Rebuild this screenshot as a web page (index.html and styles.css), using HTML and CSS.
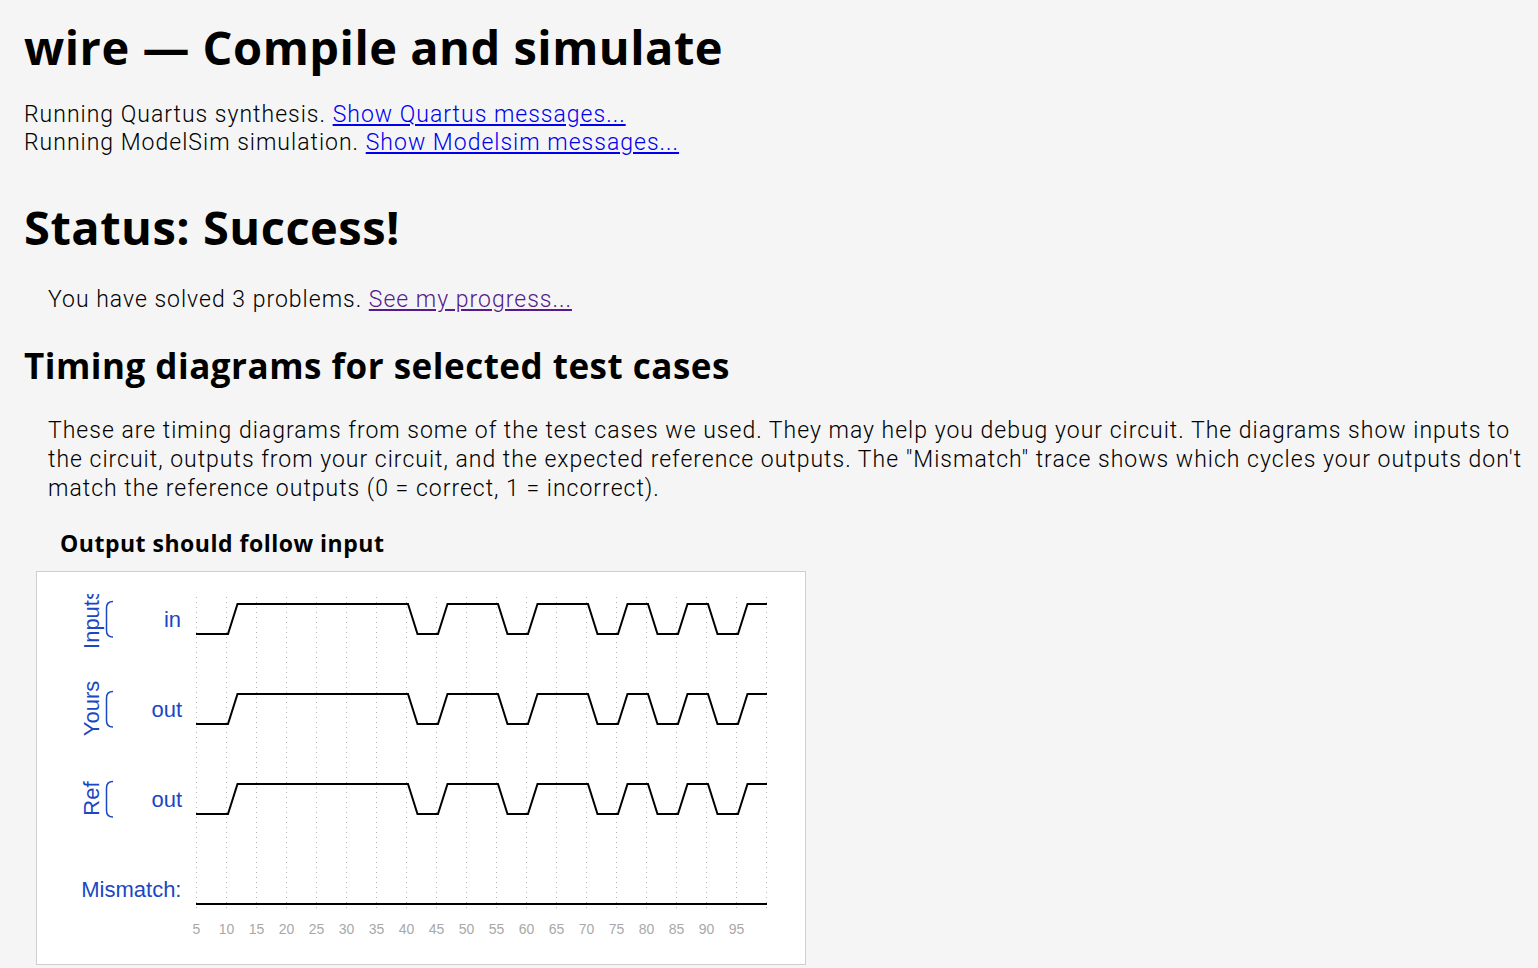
FILE: index.html
```html
<!DOCTYPE html>
<html lang="en">
<head>
<meta charset="utf-8">
<title>wire — Compile and simulate</title>
<link rel="stylesheet" href="styles.css">
</head>
<body>
<main class="page">
  <h1 class="title">wire — Compile and simulate</h1>
  <p class="log">Running Quartus synthesis. <a class="link" href="#quartus">Show Quartus messages...</a><br>Running ModelSim simulation. <a class="link" href="#modelsim">Show Modelsim messages...</a></p>

  <h1 class="status">Status: Success!</h1>
  <p class="indent solved">You have solved 3 problems. <a class="link visited" href="#progress">See my progress...</a></p>

  <h2 class="section">Timing diagrams for selected test cases</h2>
  <p class="indent intro">These are timing diagrams from some of the test cases we used. They may help you debug your circuit. The diagrams show inputs to the circuit, outputs from your circuit, and the expected reference outputs. The "Mismatch" trace shows which cycles your outputs don't match the reference outputs (0 = correct, 1 = incorrect).</p>

  <h4 class="case-title">Output should follow input</h4>
  <div class="diagram">
    <svg class="wave" width="768" height="392" viewBox="37 572 768 392" xmlns="http://www.w3.org/2000/svg">
      <defs>
        <clipPath id="clipTop"><rect x="37" y="594" width="768" height="370"/></clipPath>
      </defs>
      <g class="grid">
        <line x1="196.5" y1="597" x2="196.5" y2="912"/>
        <line x1="226.5" y1="597" x2="226.5" y2="912"/>
        <line x1="256.5" y1="597" x2="256.5" y2="912"/>
        <line x1="286.5" y1="597" x2="286.5" y2="912"/>
        <line x1="316.5" y1="597" x2="316.5" y2="912"/>
        <line x1="346.5" y1="597" x2="346.5" y2="912"/>
        <line x1="376.5" y1="597" x2="376.5" y2="912"/>
        <line x1="406.5" y1="597" x2="406.5" y2="912"/>
        <line x1="436.5" y1="597" x2="436.5" y2="912"/>
        <line x1="466.5" y1="597" x2="466.5" y2="912"/>
        <line x1="496.5" y1="597" x2="496.5" y2="912"/>
        <line x1="526.5" y1="597" x2="526.5" y2="912"/>
        <line x1="556.5" y1="597" x2="556.5" y2="912"/>
        <line x1="586.5" y1="597" x2="586.5" y2="912"/>
        <line x1="616.5" y1="597" x2="616.5" y2="912"/>
        <line x1="646.5" y1="597" x2="646.5" y2="912"/>
        <line x1="676.5" y1="597" x2="676.5" y2="912"/>
        <line x1="706.5" y1="597" x2="706.5" y2="912"/>
        <line x1="736.5" y1="597" x2="736.5" y2="912"/>
        <line x1="766.5" y1="597" x2="766.5" y2="912"/>
      </g>

      <g class="group-label">
        <g clip-path="url(#clipTop)">
          <text transform="translate(99 619) rotate(-90)">Inputs</text>
        </g>
        <text transform="translate(99 708.5) rotate(-90)">Yours</text>
        <text transform="translate(99 798.5) rotate(-90)">Ref</text>
      </g>
      <g class="bracket">
        <path d="M113 601.5 Q106.5 601.5 106.5 608 V630.5 Q106.5 637 113 637"/>
        <path d="M113 691.5 Q106.5 691.5 106.5 698 V720.5 Q106.5 727 113 727"/>
        <path d="M113 781.5 Q106.5 781.5 106.5 788 V810.5 Q106.5 817 113 817"/>
      </g>
      <g class="sig-label">
        <text x="181" y="627">in</text>
        <text x="182" y="717">out</text>
        <text x="182" y="807">out</text>
        <text x="181.5" y="897">Mismatch:</text>
      </g>

      <g class="trace">
        <path d="M196 634 H228 L237.5 604 H408 L417.5 634 H438 L447.5 604 H498 L507.5 634 H528 L537.5 604 H588 L597.5 634 H618 L627.5 604 H648 L657.5 634 H678 L687.5 604 H708 L717.5 634 H738 L747.5 604 H767"/>
        <path d="M196 724 H228 L237.5 694 H408 L417.5 724 H438 L447.5 694 H498 L507.5 724 H528 L537.5 694 H588 L597.5 724 H618 L627.5 694 H648 L657.5 724 H678 L687.5 694 H708 L717.5 724 H738 L747.5 694 H767"/>
        <path d="M196 814 H228 L237.5 784 H408 L417.5 814 H438 L447.5 784 H498 L507.5 814 H528 L537.5 784 H588 L597.5 814 H618 L627.5 784 H648 L657.5 814 H678 L687.5 784 H708 L717.5 814 H738 L747.5 784 H767"/>
        <path d="M196 904 H767"/>
      </g>

      <g class="axis">
        <text x="196.5" y="934">5</text>
        <text x="226.5" y="934">10</text>
        <text x="256.5" y="934">15</text>
        <text x="286.5" y="934">20</text>
        <text x="316.5" y="934">25</text>
        <text x="346.5" y="934">30</text>
        <text x="376.5" y="934">35</text>
        <text x="406.5" y="934">40</text>
        <text x="436.5" y="934">45</text>
        <text x="466.5" y="934">50</text>
        <text x="496.5" y="934">55</text>
        <text x="526.5" y="934">60</text>
        <text x="556.5" y="934">65</text>
        <text x="586.5" y="934">70</text>
        <text x="616.5" y="934">75</text>
        <text x="646.5" y="934">80</text>
        <text x="676.5" y="934">85</text>
        <text x="706.5" y="934">90</text>
        <text x="736.5" y="934">95</text>
      </g>
    </svg>
  </div>
</main>
</body>
</html>
```

FILE: styles.css
```css
html, body {
  margin: 0;
  padding: 0;
  background: #f5f5f5;
}

body {
  font-family: "Roboto", "Lato", sans-serif;
  font-weight: 300;
  font-size: 23px;
  line-height: 28px;
  letter-spacing: 1px;
  color: #000;
}

.page {
  padding: 19px 8px 0 24px;
}

.title,
.status,
.section,
.case-title {
  font-family: "Open Sans", "Noto Sans", sans-serif;
  font-weight: 700;
  color: #000;
  margin: 0;
  letter-spacing: 0.5px;
}

.title,
.status {
  font-size: 47px;
  line-height: 56px;
}

.log {
  margin: 26px 0 0 0;
}

.status {
  margin-top: 42px;
}

.indent {
  margin: 0 0 0 24px;
}

.solved {
  margin-top: 31px;
}

.section {
  font-size: 35px;
  line-height: 44px;
  margin-top: 30px;
}

.intro {
  margin-top: 28px;
  line-height: 29px;
}

.case-title {
  font-size: 23px;
  line-height: 30px;
  margin: 25px 0 0 36px;
}

.link {
  color: #0000ee;
  text-decoration: underline;
}

.link.visited {
  color: #551a8b;
}

.diagram {
  margin: 13px 0 0 12px;
  width: 768px;
  height: 392px;
  background: #fff;
  border: 1px solid #cfcfcf;
}

.wave {
  display: block;
}

.grid line {
  stroke: #b4b4b4;
  stroke-width: 1;
  stroke-dasharray: 1 4;
}

.trace path {
  fill: none;
  stroke: #000;
  stroke-width: 2;
  stroke-linejoin: miter;
}

.group-label text,
.sig-label text {
  font-family: "Liberation Sans", Arial, sans-serif;
  font-weight: 400;
  font-size: 22px;
  letter-spacing: 0;
  fill: #1a47c2;
}

.group-label text {
  text-anchor: middle;
}

.sig-label text {
  text-anchor: end;
}

.bracket path {
  fill: none;
  stroke: #1a47c2;
  stroke-width: 1.5;
}

.axis text {
  font-family: "Liberation Sans", Arial, sans-serif;
  font-weight: 400;
  font-size: 14px;
  letter-spacing: 0;
  fill: #a8a8a8;
  text-anchor: middle;
}
```
